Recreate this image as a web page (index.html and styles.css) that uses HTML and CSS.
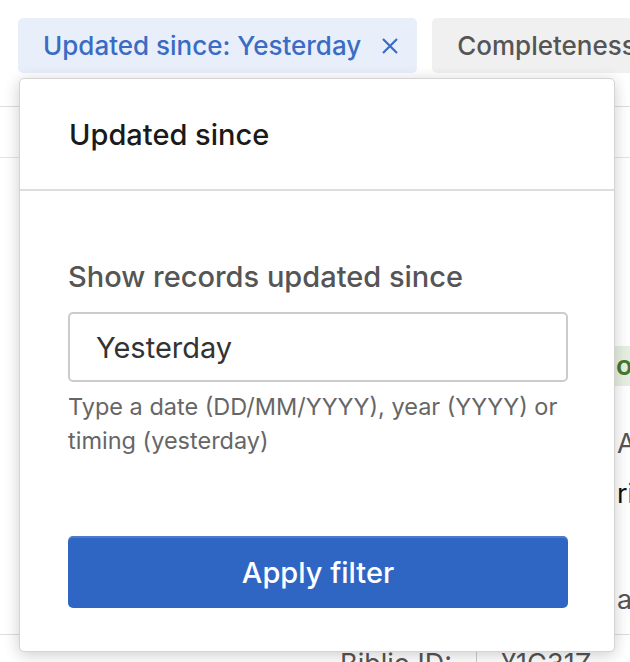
FILE: index.html
```html
<!DOCTYPE html>
<html>
<head>
    <title>Records</title>
    <link rel="stylesheet" href="styles.css">
</head>
<body>
    <div class="filters">
        <div class="chip chip-active">
            <span>Updated since: Yesterday</span>
            <svg class="chip-close" width="18" height="18" viewBox="0 0 18 18">
                <path d="M2 2 L16 16 M16 2 L2 16" stroke="currentColor" stroke-width="2.2" fill="none"/>
            </svg>
        </div>
        <div class="chip">Completeness</div>
    </div>

    <div class="results">
        <div class="results-head"></div>
        <div class="record">
            <div class="badge">ol</div>
            <div class="rec-title">A’</div>
            <div class="rec-sub">ri</div>
            <div class="rec-meta">a</div>
        </div>
        <div class="record-ids">
            <span class="id-label">Biblio ID:</span>
            <span class="id-sep"></span>
            <span class="id-val">¥1G31Z</span>
        </div>
    </div>

    <!-- Updated since popover -->
    <div class="popover">
        <div class="popover-head">Updated since</div>
        <div class="popover-body">
            <label for="since" class="field-label">Show records updated since</label>
            <input type="text" id="since" class="field-input" value="Yesterday">
            <p class="field-help">Type a date (DD/MM/YYYY), year (YYYY) or timing (yesterday)</p>
            <button type="button" class="apply-btn">Apply filter</button>
        </div>
    </div>
</body>
</html>
```

FILE: styles.css
```css
body {
    margin: 0;
    font-family: Inter, "Liberation Sans", sans-serif;
    background-color: #fff;
    color: #222;
    overflow: hidden;
}
.filters {
    display: flex;
    gap: 15px;
    padding: 18px 0 0 18px;
    white-space: nowrap;
    overflow: hidden;
}
.chip {
    display: flex;
    align-items: center;
    height: 55px;
    padding: 0 25px;
    background-color: #f0f0f0;
    color: #555;
    border-radius: 5px;
    font-size: 26px;
    font-weight: 500;
}
.chip-active {
    background-color: #e8effa;
    color: #3b6cc4;
    gap: 20px;
    padding-right: 18px;
}
.results {
    margin-top: 33px;
}
.results-head {
    height: 50px;
    border-top: 1px solid #ddd;
    border-bottom: 1px solid #e4e4e4;
}
.record {
    padding: 188px 0 0 606px;
    font-size: 27px;
    line-height: 36px;
    white-space: nowrap;
}
.badge {
    display: inline-block;
    background-color: #e6efe2;
    color: #3f7a30;
    font-weight: 600;
    padding: 2px 10px;
}
.rec-title {
    margin-top: 40px;
    padding-left: 11px;
    color: #555;
}
.rec-sub {
    margin-top: 14px;
    padding-left: 11px;
    color: #111;
}
.rec-meta {
    margin-top: 70px;
    padding-left: 11px;
    color: #555;
}
.record-ids {
    display: flex;
    align-items: center;
    gap: 14px;
    margin-top: 16px;
    padding: 12px 0 0 340px;
    border-top: 1px solid #ddd;
    font-size: 27px;
    color: #555;
    white-space: nowrap;
}
.id-sep {
    width: 1px;
    height: 30px;
    background-color: #ccc;
    margin: 0 10px;
}
.popover {
    position: absolute;
    top: 78px;
    left: 19px;
    width: 594px;
    height: 572px;
    background-color: #fff;
    border: 1px solid #d4d4d4;
    border-radius: 5px;
    box-shadow: 0 3px 16px rgba(0, 0, 0, 0.2);
}
.popover-head {
    height: 110px;
    display: flex;
    align-items: center;
    padding: 0 49px;
    border-bottom: 2px solid #ddd;
    font-size: 29px;
    font-weight: 500;
    color: #1a1a1a;
}
.popover-body {
    padding: 67px 0 0 48px;
}
.field-label {
    display: block;
    font-size: 29px;
    font-weight: 500;
    color: #555;
    line-height: 38px;
}
.field-input {
    display: block;
    box-sizing: border-box;
    width: 500px;
    height: 70px;
    margin-top: 16px;
    padding: 0 26px;
    border: 2px solid #ccc;
    border-radius: 5px;
    font-family: inherit;
    font-size: 29px;
    color: #333;
}
.field-help {
    width: 500px;
    margin: 8px 0 0;
    font-size: 23.5px;
    line-height: 34px;
    color: #666;
}
.apply-btn {
    display: block;
    width: 500px;
    height: 72px;
    margin-top: 78px;
    border: none;
    border-radius: 5px;
    background-color: #3066c3;
    box-shadow: inset 0 2px 0 rgba(255, 255, 255, 0.14);
    color: #fff;
    font-family: inherit;
    font-size: 29px;
    font-weight: 500;
    cursor: pointer;
}
```
